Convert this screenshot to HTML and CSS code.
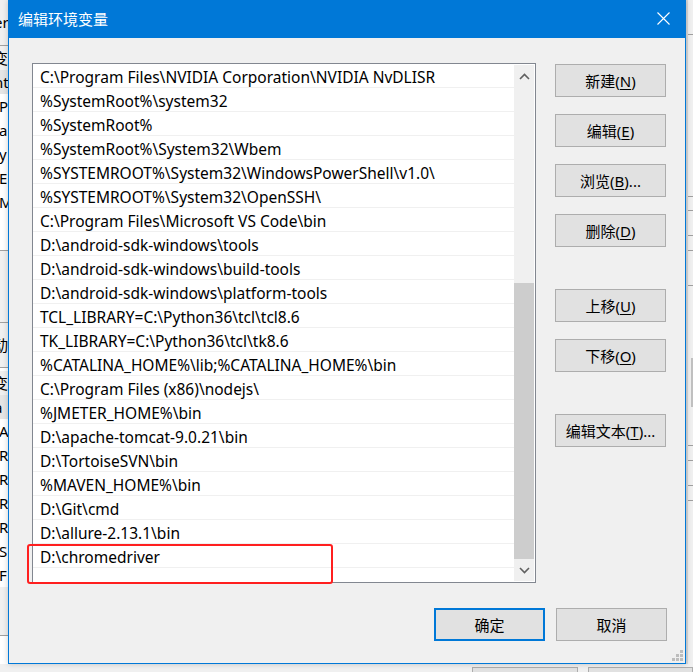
FILE: index.html
```html
<!DOCTYPE html>
<html lang="zh-CN">
<head>
    <meta charset="UTF-8">
    <title>编辑环境变量</title>
    <link rel="stylesheet" href="styles.css">
</head>
<body>
    <div class="desktop">
        <!-- the parent window peeking out on the left -->
        <div class="behind-left">
            <div class="bl-head">er</div>
            <div class="bl-row bl-gray">变</div>
            <div class="bl-row bl-sel">nt</div>
            <div class="bl-row">Pr</div>
            <div class="bl-row">a</div>
            <div class="bl-row">y</div>
            <div class="bl-row">E</div>
            <div class="bl-row">M</div>
            <div class="bl-gap"></div>
            <div class="bl-mid">动</div>
            <div class="bl-row bl-gray bl-first">变</div>
            <div class="bl-row bl-sel">a</div>
            <div class="bl-row">A</div>
            <div class="bl-row">R</div>
            <div class="bl-row">R</div>
            <div class="bl-row">R</div>
            <div class="bl-row">R</div>
            <div class="bl-row">S</div>
            <div class="bl-row">F</div>
            <div class="bl-foot"></div>
        </div>

        <div class="behind-right">
            <div class="br-line" style="top: 34px"></div>
            <div class="br-line" style="top: 196px"></div>
            <div class="br-line" style="top: 210px"></div>
            <div class="br-line" style="top: 235px"></div>
            <div class="br-line" style="top: 250px"></div>
            <div class="br-line" style="top: 285px"></div>
            <div class="br-line" style="top: 445px"></div>
            <div class="br-line" style="top: 460px"></div>
            <div class="br-line" style="top: 485px"></div>
            <div class="br-line" style="top: 500px"></div>
            <div class="br-thumb"></div>
        </div>

        <div class="behind-bottom">
            <span class="ghost-btn"></span>
            <span class="ghost-btn"></span>
        </div>

        <div class="dialog">
            <div class="titlebar">
                <span class="title">编辑环境变量</span>
                <span class="close">
                    <svg width="13" height="13" viewBox="0 0 13 13">
                        <path d="M0.5 0.5 L12.5 12.5 M12.5 0.5 L0.5 12.5" stroke="#fff" stroke-width="1.1" fill="none"/>
                    </svg>
                </span>
            </div>

            <div class="body">
                <div class="main">
                    <div class="list-wrap">
                        <div class="listbox">
                            <ul class="rows">
                                <li>C:\Program Files\NVIDIA Corporation\NVIDIA NvDLISR</li>
                                <li>%SystemRoot%\system32</li>
                                <li>%SystemRoot%</li>
                                <li>%SystemRoot%\System32\Wbem</li>
                                <li>%SYSTEMROOT%\System32\WindowsPowerShell\v1.0\</li>
                                <li>%SYSTEMROOT%\System32\OpenSSH\</li>
                                <li>C:\Program Files\Microsoft VS Code\bin</li>
                                <li>D:\android-sdk-windows\tools</li>
                                <li>D:\android-sdk-windows\build-tools</li>
                                <li>D:\android-sdk-windows\platform-tools</li>
                                <li>TCL_LIBRARY=C:\Python36\tcl\tcl8.6</li>
                                <li>TK_LIBRARY=C:\Python36\tcl\tk8.6</li>
                                <li>%CATALINA_HOME%\lib;%CATALINA_HOME%\bin</li>
                                <li>C:\Program Files (x86)\nodejs\</li>
                                <li>%JMETER_HOME%\bin</li>
                                <li>D:\apache-tomcat-9.0.21\bin</li>
                                <li>D:\TortoiseSVN\bin</li>
                                <li>%MAVEN_HOME%\bin</li>
                                <li>D:\Git\cmd</li>
                                <li>D:\allure-2.13.1\bin</li>
                                <li>D:\chromedriver</li>
                                <li></li>
                            </ul>
                            <div class="scrollbar">
                                <div class="sb-arrow">
                                    <svg width="11" height="7" viewBox="0 0 11 7">
                                        <path d="M1 6 L5.5 1.5 L10 6" stroke="#606060" stroke-width="1.6" fill="none"/>
                                    </svg>
                                </div>
                                <div class="sb-track">
                                    <div class="sb-thumb"></div>
                                </div>
                                <div class="sb-arrow">
                                    <svg width="11" height="7" viewBox="0 0 11 7">
                                        <path d="M1 1 L5.5 5.5 L10 1" stroke="#606060" stroke-width="1.6" fill="none"/>
                                    </svg>
                                </div>
                            </div>
                        </div>
                        <!-- red annotation round the new entry -->
                        <div class="mark"></div>
                    </div>

                    <div class="actions">
                        <button>新建(<u>N</u>)</button>
                        <button>编辑(<u>E</u>)</button>
                        <button>浏览(<u>B</u>)...</button>
                        <button>删除(<u>D</u>)</button>
                        <button class="spaced">上移(<u>U</u>)</button>
                        <button>下移(<u>O</u>)</button>
                        <button class="spaced">编辑文本(<u>T</u>)...</button>
                    </div>
                </div>

                <div class="footer">
                    <button class="default">确定</button>
                    <button>取消</button>
                </div>
            </div>

            <span class="grip">
                <svg width="11" height="11" viewBox="0 0 11 11" fill="#bdbdbd">
                    <rect x="8" y="0" width="3" height="3"/>
                    <rect x="4" y="4" width="3" height="3"/>
                    <rect x="8" y="4" width="3" height="3"/>
                    <rect x="0" y="8" width="3" height="3"/>
                    <rect x="4" y="8" width="3" height="3"/>
                    <rect x="8" y="8" width="3" height="3"/>
                </svg>
            </span>
        </div>
    </div>
</body>
</html>
```

FILE: styles.css
```css
* {
    box-sizing: border-box;
}
body {
    margin: 0;
    font-family: "Noto Sans", "Noto Sans CJK SC", sans-serif;
    font-size: 15px;
    color: #000;
    background-color: #f0f0f0;
}
.desktop {
    position: relative;
    width: 693px;
    height: 672px;
    overflow: hidden;
    background-color: #f0f0f0;
}

/* windows behind the dialog */
.behind-left {
    position: absolute;
    left: 0;
    top: 0;
    width: 8px;
    height: 672px;
    overflow: hidden;
    background-color: #fff;
}
.bl-head {
    height: 46px;
    line-height: 44px;
    background-color: #f0f0f0;
    border-bottom: 1px solid #a0a0a0;
    text-indent: -6px;
    white-space: nowrap;
}
.bl-row {
    height: 24px;
    line-height: 24px;
    text-indent: -1px;
    white-space: nowrap;
}
.bl-gray {
    background-color: #f0f0f0;
    text-indent: -7px;
}
.bl-sel {
    background-color: #e5e5e5;
    text-indent: -6px;
}
.bl-gap {
    height: 72px;
    margin-top: 36px;
    background-color: #f0f0f0;
    border-top: 1px solid #a0a0a0;
}
.bl-mid {
    height: 46px;
    line-height: 44px;
    background-color: #f0f0f0;
    border-top: 1px solid #a0a0a0;
    border-bottom: 1px solid #a0a0a0;
    text-indent: -7px;
}
.bl-first {
    margin-top: 3px;
}
.bl-foot {
    height: 49px;
    border-bottom: 1px solid #a0a0a0;
    background-color: #f0f0f0;
}
.behind-right {
    position: absolute;
    left: 686px;
    top: 0;
    width: 7px;
    height: 672px;
    background-color: #f0f0f0;
    border-left: 2px solid #d8d8d8;
}
.br-line {
    position: absolute;
    left: 0;
    right: 0;
    height: 1px;
    background-color: #a0a0a0;
}
.br-thumb {
    position: absolute;
    left: 3px;
    right: 0;
    top: 358px;
    height: 49px;
    background-color: #c0c0c0;
}
.behind-bottom {
    position: absolute;
    left: 0;
    top: 664px;
    width: 693px;
    height: 8px;
    display: flex;
    gap: 10px;
    padding-left: 472px;
    padding-top: 3px;
    background-color: #f0f0f0;
}
.ghost-btn {
    width: 111px;
    height: 20px;
    background-color: #e1e1e1;
    border: 1px solid #adadad;
}

/* dialog */
.dialog {
    position: absolute;
    left: 8px;
    top: 0;
    width: 678px;
    height: 664px;
    background-color: #f0f0f0;
    border: 1px solid #0078d7;
    border-top: none;
    box-shadow: 0 0 6px rgba(0, 0, 0, 0.2);
}
.titlebar {
    height: 38px;
    margin: 0 -1px;
    background-color: #0078d7;
    display: flex;
    align-items: center;
    justify-content: space-between;
    padding: 0 16px 2px 10px;
    color: #fff;
}
.title {
    font-size: 15px;
}
.close {
    display: flex;
}
.body {
    padding: 25px 18px 0 23px;
}
.main {
    display: flex;
    align-items: flex-start;
}
.list-wrap {
    position: relative;
}
.listbox {
    width: 504px;
    height: 520px;
    border: 1px solid #828790;
    background-color: #fff;
    display: flex;
    overflow: hidden;
}
.rows {
    list-style: none;
    margin: 0;
    padding: 0;
    flex: 1;
}
.rows li {
    height: 24px;
    padding: 2px 0 0 7px;
    font-size: 15.5px;
    line-height: 22px;
    border-bottom: 1px solid #f0f0f0;
    white-space: nowrap;
}
.scrollbar {
    width: 20px;
    margin: 1px 1px 1px 0;
    background-color: #f0f0f0;
    display: flex;
    flex-direction: column;
}
.sb-arrow {
    height: 22px;
    display: flex;
    align-items: center;
    justify-content: center;
}
.sb-track {
    flex: 1;
    display: flex;
    flex-direction: column;
    justify-content: flex-end;
}
.sb-thumb {
    height: 276px;
    background-color: #cdcdcd;
}
.mark {
    position: absolute;
    left: -5px;
    top: 481px;
    width: 306px;
    height: 40px;
    border: 2px solid #ff1f1f;
    border-radius: 3px;
}

/* buttons */
button {
    font-family: inherit;
    font-size: 15px;
    color: #000;
    width: 111px;
    height: 33px;
    padding: 0;
    background-color: #e1e1e1;
    border: 1px solid #adadad;
}
button u {
    text-underline-offset: 2px;
}
.actions {
    margin-left: 19px;
    padding-top: 1px;
    display: flex;
    flex-direction: column;
    gap: 17px;
}
.actions .spaced {
    margin-top: 25px;
}
.footer {
    margin-top: 25px;
    display: flex;
    justify-content: flex-end;
    gap: 11px;
}
.footer .default {
    border: 2px solid #0078d7;
}
.grip {
    position: absolute;
    right: 2px;
    bottom: 2px;
    display: flex;
}
```
